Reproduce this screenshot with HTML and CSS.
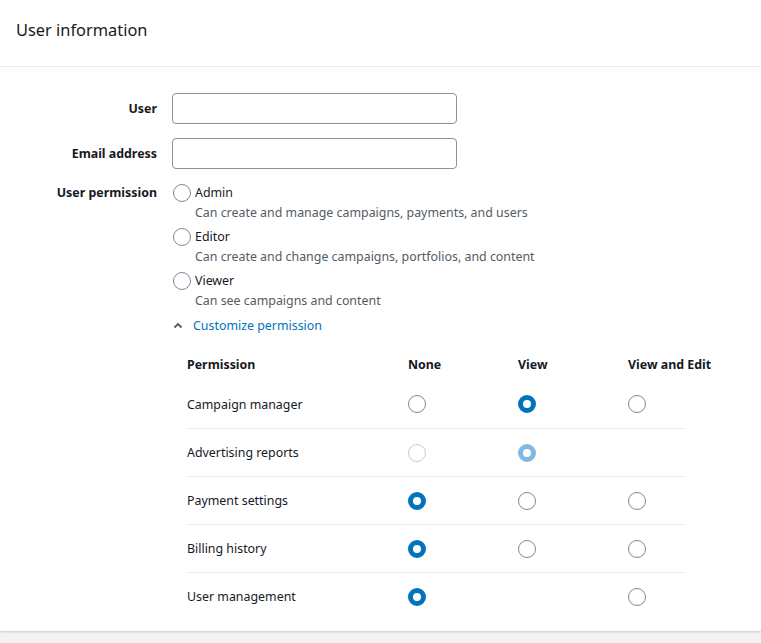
FILE: index.html
```html
<!DOCTYPE html>
<html>
<head>
<meta charset="utf-8">
<link rel="stylesheet" href="styles.css">
</head>
<body>
<div class="card">
  <div class="card-header"><h2 class="title">User information</h2></div>
  <div class="card-body">
    <div class="form-row">
      <label class="form-label">User</label>
      <div class="form-field"><input class="text-input" type="text"></div>
    </div>
    <div class="form-row">
      <label class="form-label">Email address</label>
      <div class="form-field"><input class="text-input" type="text"></div>
    </div>
    <div class="form-row perm-row">
      <label class="form-label perm-label">User permission</label>
      <div class="form-field">
        <div class="option">
          <div class="option-main"><span class="radio"></span><span class="option-name">Admin</span></div>
          <div class="option-desc">Can create and manage campaigns, payments, and users</div>
        </div>
        <div class="option">
          <div class="option-main"><span class="radio"></span><span class="option-name">Editor</span></div>
          <div class="option-desc">Can create and change campaigns, portfolios, and content</div>
        </div>
        <div class="option">
          <div class="option-main"><span class="radio"></span><span class="option-name">Viewer</span></div>
          <div class="option-desc">Can see campaigns and content</div>
        </div>
        <div class="customize">
          <svg class="caret" width="10" height="7" viewBox="0 0 10 7"><path d="M1.5 5.5 L5 2 L8.5 5.5" fill="none" stroke="#545b64" stroke-width="1.8"/></svg>
          <span class="link">Customize permission</span>
        </div>
        <div class="perm-table">
          <div class="t-row t-head">
            <div class="t-cell">Permission</div>
            <div class="t-cell">None</div>
            <div class="t-cell">View</div>
            <div class="t-cell">View and Edit</div>
          </div>
          <div class="t-row">
            <div class="t-cell">Campaign manager</div>
            <div class="t-cell"><span class="radio"></span></div>
            <div class="t-cell"><span class="radio checked"></span></div>
            <div class="t-cell"><span class="radio"></span></div>
          </div>
          <div class="t-row sep">
            <div class="t-cell">Advertising reports</div>
            <div class="t-cell"><span class="radio disabled"></span></div>
            <div class="t-cell"><span class="radio checked disabled"></span></div>
            <div class="t-cell"></div>
          </div>
          <div class="t-row sep">
            <div class="t-cell">Payment settings</div>
            <div class="t-cell"><span class="radio checked"></span></div>
            <div class="t-cell"><span class="radio"></span></div>
            <div class="t-cell"><span class="radio"></span></div>
          </div>
          <div class="t-row sep">
            <div class="t-cell">Billing history</div>
            <div class="t-cell"><span class="radio checked"></span></div>
            <div class="t-cell"><span class="radio"></span></div>
            <div class="t-cell"><span class="radio"></span></div>
          </div>
          <div class="t-row sep">
            <div class="t-cell">User management</div>
            <div class="t-cell"><span class="radio checked"></span></div>
            <div class="t-cell"></div>
            <div class="t-cell"><span class="radio"></span></div>
          </div>
        </div>
      </div>
    </div>
  </div>
</div>
</body>
</html>
```

FILE: styles.css
```css
* { box-sizing: border-box; }
html, body { margin: 0; padding: 0; }
body {
  background: #f2f3f3;
  font-family: "Noto Sans", "Open Sans", sans-serif;
  font-size: 12.4px;
  color: #16191f;
  height: 643px;
  overflow: hidden;
}
.card {
  background: #fff;
  box-shadow: 0 1px 2px rgba(0,0,0,0.18);
  padding-bottom: 11px;
}
.card-header {
  height: 67px;
  border-bottom: 1px solid #eaeded;
  padding: 18px 16px 0;
}
.title {
  margin: 0;
  font-size: 16.4px;
  font-weight: 400;
  line-height: 24px;
}
.card-body {
  padding-top: 26px;
}
.form-row {
  display: grid;
  grid-template-columns: 157px 1fr;
  column-gap: 15px;
  align-items: center;
  margin-bottom: 14px;
}
.form-label {
  text-align: right;
  font-weight: 700;
  line-height: 20px;
}
.perm-row { align-items: start; margin-bottom: 0; }
.text-input {
  display: block;
  width: 285px;
  height: 31px;
  border: 1px solid #879596;
  border-radius: 4px;
  background: #fff;
  font: inherit;
}
.option { margin-bottom: 4px; }
.option-main {
  display: flex;
  align-items: center;
  gap: 4px;
  height: 20px;
}
.option-name { line-height: 20px; }
.option-desc {
  padding-left: 23px;
  color: #545b64;
  line-height: 20px;
}
.radio {
  display: inline-block;
  width: 18px;
  height: 18px;
  border-radius: 50%;
  border: 1px solid #7d8998;
  background: #fff;
  flex: none;
  margin-left: 1px;
}
.radio.checked {
  border: 5px solid #0073bb;
}
.radio.disabled { border-color: #c6ccd5; }
.radio.checked.disabled { border-color: #80b9e2; }
.customize {
  display: flex;
  align-items: center;
  height: 20px;
  margin-top: 1px;
}
.caret { margin-left: 1px; margin-right: 10px; }
.link { color: #0073bb; }
.perm-table {
  margin-top: 20px;
  margin-left: 15px;
  width: 498px;
}
.t-row {
  display: grid;
  grid-template-columns: 221px 110px 110px 57px;
  align-items: center;
  height: 48px;
}
.t-row.sep { border-top: 1px solid #eaeded; height: 48px; }
.t-head { height: 25px; font-weight: 700; align-items: start; }
.t-head .t-cell { line-height: 20px; white-space: nowrap; }
.t-cell { display: flex; align-items: center; }
.t-cell .radio { margin-left: 0; }
```
